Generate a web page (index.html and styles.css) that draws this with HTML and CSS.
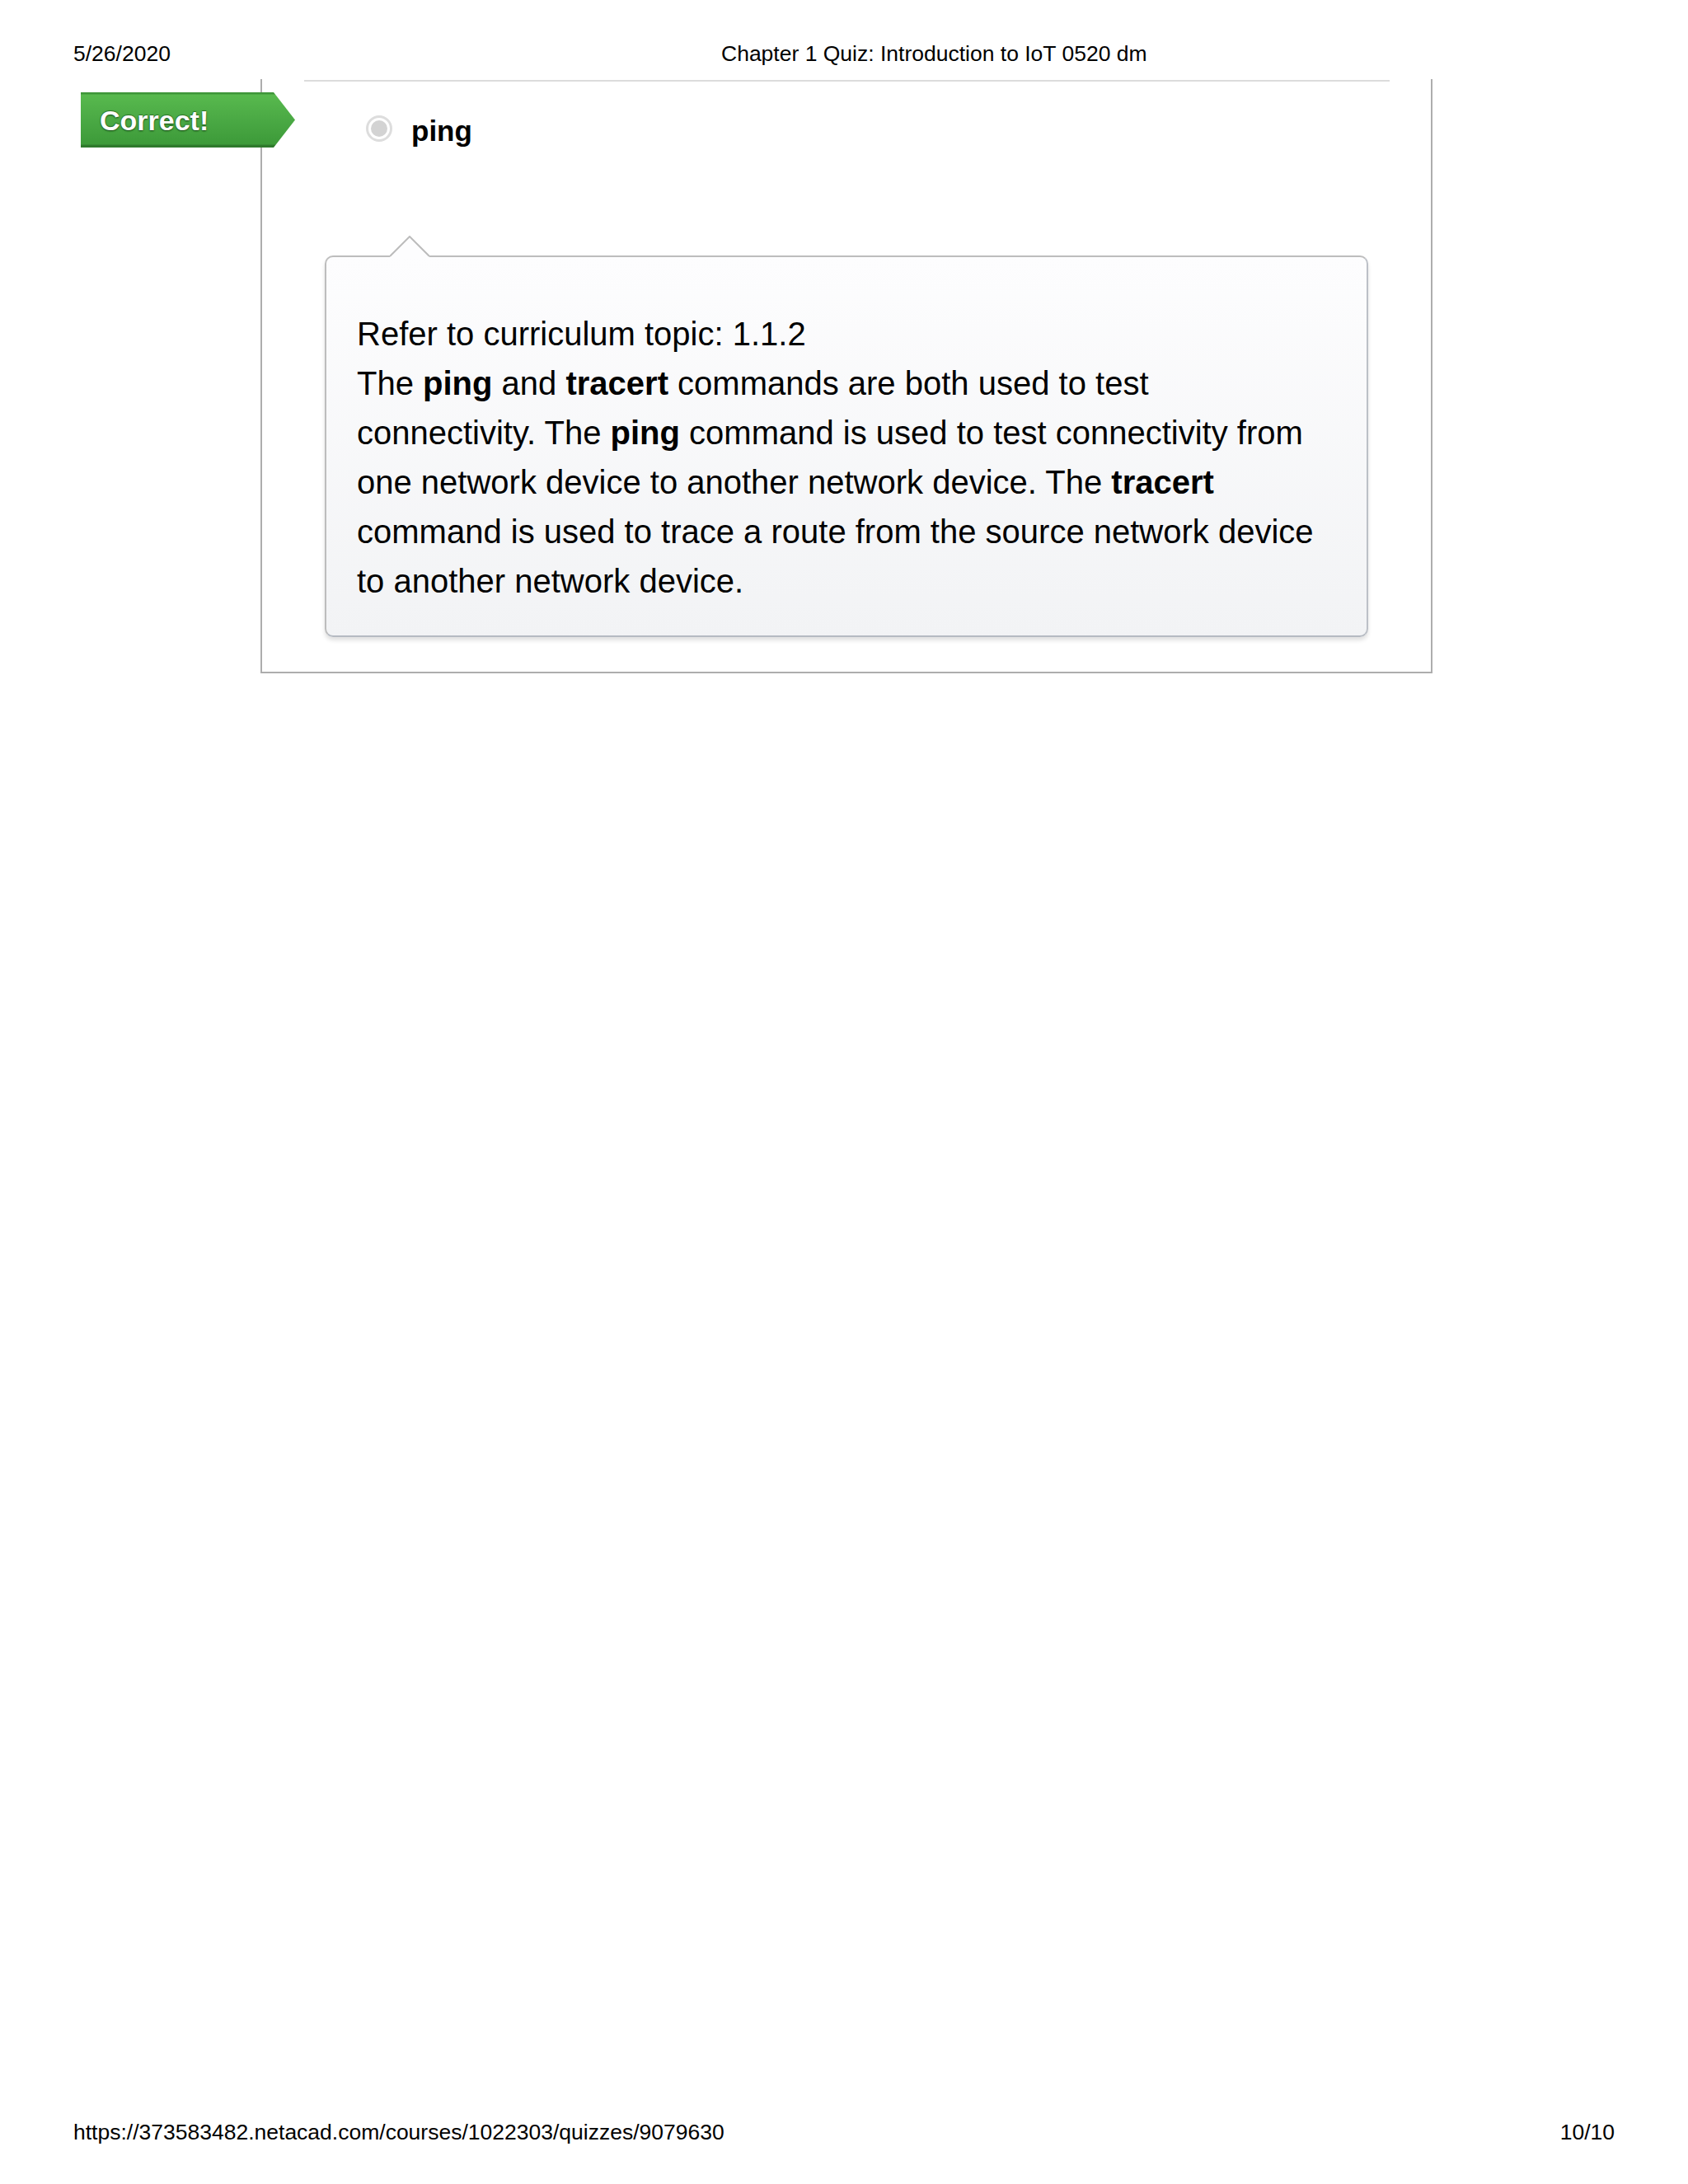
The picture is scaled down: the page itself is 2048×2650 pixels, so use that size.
FILE: index.html
```html
<!DOCTYPE html>
<html lang="en">
<head>
<meta charset="utf-8">
<title>Chapter 1 Quiz: Introduction to IoT 0520 dm</title>
<link rel="stylesheet" href="styles.css">
</head>
<body>
<div class="page">
  <header class="print-header">
    <span class="date">5/26/2020</span>
    <span class="title">Chapter 1 Quiz: Introduction to IoT 0520 dm</span>
  </header>

  <main class="question-box">
    <div class="badge">Correct!</div>
    <div class="top-rule"></div>
    <div class="answer">
      <span class="radio"><span class="radio-dot"></span></span>
      <span class="answer-text">ping</span>
    </div>
    <div class="feedback">
      <svg class="feedback-arrow" width="48" height="28" viewBox="0 0 48 28">
        <path d="M0 28 L0 25 L24 1 L48 25 L48 28 Z" fill="#fdfdfe"/>
        <polyline points="0,25 24,1 48,25" fill="none" stroke="#bcbcbc" stroke-width="2"/>
      </svg>
      <p class="feedback-text">Refer to curriculum topic: 1.1.2<br>The <b>ping</b> and <b>tracert</b> commands are both used to test connectivity. The <b>ping</b> command is used to test connectivity from one network device to another network device. The <b>tracert</b> command is used to trace a route from the source network device to another network device.</p>
    </div>
  </main>

  <footer class="print-footer">
    <span class="url">https://373583482.netacad.com/courses/1022303/quizzes/9079630</span>
    <span class="pages">10/10</span>
  </footer>
</div>
</body>
</html>
```

FILE: styles.css
```css
html, body {
  margin: 0;
  padding: 0;
  background: #ffffff;
}

.page {
  font-family: "Liberation Sans", Arial, sans-serif;
  color: #000;
  min-height: 2650px;
  display: flex;
  flex-direction: column;
  box-sizing: border-box;
}

.print-header {
  display: flex;
  padding: 50px 89px 0 89px;
  font-size: 26.5px;
  line-height: 30px;
  height: 30px;
}

.print-header .date {
  width: 786px;
  flex: none;
}

.question-box {
  position: relative;
  margin: 16px 0 0 316px;
  width: 1422px;
  box-sizing: border-box;
  border: 2px solid #adadad;
  border-top: none;
  padding-top: 1px;
}

.badge {
  position: absolute;
  left: -220px;
  top: 16px;
  width: 260px;
  height: 67px;
  box-sizing: border-box;
  padding-left: 23px;
  padding-top: 1px;
  font-size: 34px;
  font-weight: bold;
  line-height: 66px;
  color: #ffffff;
  text-shadow: 0 1px 2px rgba(0, 40, 0, 0.75), 0 -1px 1px rgba(0, 50, 0, 0.45);
  background: linear-gradient(#3f9639 0, #3f9639 2px, #58b94e 3px, #4aa944 50%, #3d9a39 94%, #2f7a2c 96%, #2f7a2c 100%);
  clip-path: polygon(0 0, 234px 0, 260px 50%, 234px 100%, 0 100%);
}

.top-rule {
  height: 2px;
  background: #dcdcdc;
  margin: 0 50px 0 51px;
}

.answer {
  display: flex;
  align-items: flex-start;
  gap: 23px;
  margin-top: 40px;
  padding-left: 126px;
}

.radio {
  width: 32px;
  height: 32px;
  margin-top: 1px;
  box-sizing: border-box;
  border-radius: 50%;
  border: 3px solid #dddddd;
  background: #ffffff;
  display: flex;
  align-items: center;
  justify-content: center;
}

.radio-dot {
  width: 20px;
  height: 20px;
  border-radius: 50%;
  background: #d3d3d3;
}

.answer-text {
  font-size: 35px;
  font-weight: bold;
  line-height: 40px;
}

.feedback {
  position: relative;
  margin: 131px 76px 42px 76px;
  border: 2px solid #bdbdbd;
  border-right-color: #bcc0c7;
  border-bottom-color: #b5bac2;
  border-radius: 10px;
  background: linear-gradient(#fdfdfe, #f2f3f5);
  box-shadow: 0 4px 5px rgba(0, 0, 0, 0.12);
  padding: 63px 50px 36px 37px;
}

.feedback-arrow {
  position: absolute;
  left: 77px;
  top: -26px;
  display: block;
}

.feedback-text {
  margin: 0;
  font-size: 40px;
  line-height: 60px;
  color: #000;
}

.feedback-text b {
  font-weight: bold;
}

.print-footer {
  margin-top: auto;
  display: flex;
  justify-content: space-between;
  padding: 0 89px 48px 89px;
  font-size: 26.5px;
  line-height: 30px;
}
```
